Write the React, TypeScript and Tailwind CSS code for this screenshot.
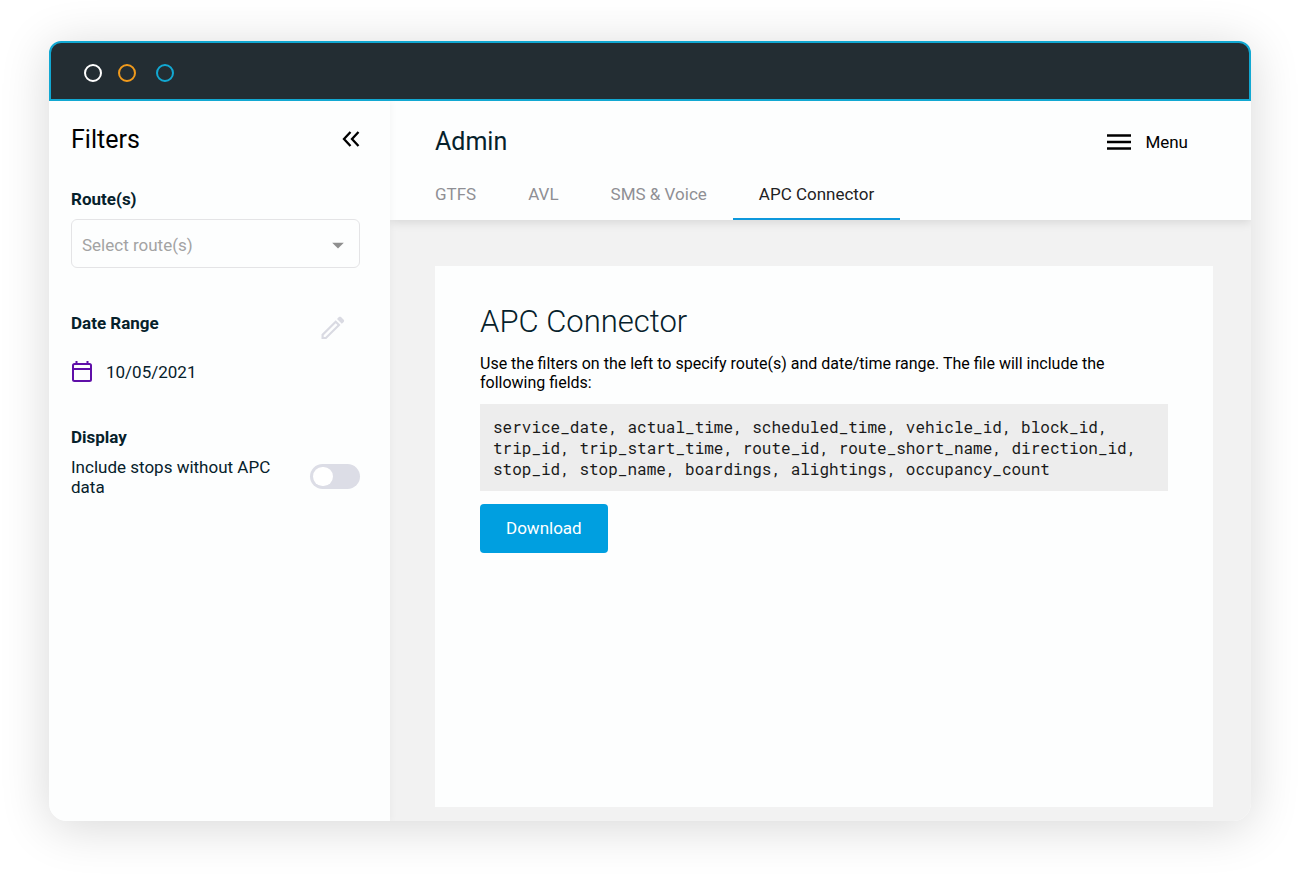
import React, { useState } from "react";
import { MdArrowDropDown } from "react-icons/md";

const TABS = ["GTFS", "AVL", "SMS & Voice", "APC Connector"];

const FIELDS = [
  "service_date",
  "actual_time",
  "scheduled_time",
  "vehicle_id",
  "block_id",
  "trip_id",
  "trip_start_time",
  "route_id",
  "route_short_name",
  "direction_id",
  "stop_id",
  "stop_name",
  "boardings",
  "alightings",
  "occupancy_count",
];

const headingClassName = "text-[17px] leading-5 font-bold text-[#06212b]";

const TitleBar: React.FC = () => (
  <div className="flex h-[60px] flex-shrink-0 items-center rounded-t-xl border-2 border-[#12a8d2] bg-[#232d33] px-[33px] pt-1">
    <span className="h-[18px] w-[18px] rounded-full border-2 border-white" />
    <span className="ml-4 h-[18px] w-[18px] rounded-full border-2 border-[#f09a1c]" />
    <span className="ml-5 h-[18px] w-[18px] rounded-full border-2 border-[#12a8d2]" />
  </div>
);

const Sidebar: React.FC = () => {
  const [includeStops, setIncludeStops] = useState(false);

  return (
    <aside className="z-10 w-[341px] flex-shrink-0 bg-[#fdfefe] pl-[22px] pr-[30px] pt-[23px] shadow-[0_0_8px_rgba(0,0,0,0.05)]">
      <div className="flex items-start justify-between">
        <h2 className="text-[25px] leading-8 text-black">Filters</h2>
        <button type="button" aria-label="Collapse filters" className="mt-[7px]">
          <svg width="18" height="16" viewBox="0 0 18 16" fill="none" stroke="#000" strokeWidth="2.3">
            <path d="M8.500 1 2 8l6.500 7M16.500 1 10 8l6.500 7" />
          </svg>
        </button>
      </div>

      <label htmlFor="routes" className={`mt-[33px] block ${headingClassName}`}>
        Route(s)
      </label>
      <div className="relative mt-[10px]">
        <select
          id="routes"
          defaultValue=""
          className="block h-[49px] w-full appearance-none rounded-md border border-[#e4e4e6] bg-transparent px-[10px] pt-1 text-[17px] text-[#a3a3a3]"
        >
          <option value="">Select route(s)</option>
        </select>
        <MdArrowDropDown
          className="pointer-events-none absolute right-2 top-3 h-7 w-7 text-[#8f8f8f]"
          aria-hidden="true"
        />
      </div>

      <div className="mt-[45px] flex justify-between pr-[15px]">
        <h3 className={headingClassName}>Date Range</h3>
        <button type="button" aria-label="Edit date range" className="mt-[3px]">
          <svg width="25" height="24" viewBox="0 0 25 24" fill="#d9dae2">
            <path
              fillRule="evenodd"
              d="M1.500 18.200 15.700 4.200l4.800 4.800-14.200 14H1.500v-4.800Zm2.200 2.700h1.700L17.500 9 15.700 7.200 3.700 19.200v1.700Z"
            />
            <path d="m17 3 1.900-1.900c.6-.6 1.500-.6 2.100 0l2.700 2.700c.6.6.6 1.500 0 2.100l-1.900 1.900L17 3Z" />
          </svg>
        </button>
      </div>

      <div className="mt-5 flex items-center">
        <svg width="22" height="22" viewBox="0 0 22 22" fill="none" stroke="#5f0fa8" strokeWidth="2">
          <rect x="2" y="3" width="18" height="17" rx="1.500" />
          <path d="M2 8h18M5.500 0v4M16.500 0v4" />
        </svg>
        <span className="ml-[13px] text-[17px] leading-6 text-[#06212b]">10/05/2021</span>
      </div>

      <h3 className={`mt-[43px] ${headingClassName}`}>Display</h3>
      <div className="mt-[10px] flex items-start justify-between">
        <label htmlFor="include-stops" className="w-[220px] text-[17px] leading-5 text-[#06212b]">
          Include stops without APC data
        </label>
        <input
          id="include-stops"
          type="checkbox"
          role="switch"
          checked={includeStops}
          onChange={(e) => setIncludeStops(e.target.checked)}
          className="mt-[7px] h-[25px] w-[50px] flex-shrink-0 cursor-pointer appearance-none rounded-full bg-[#dcdde6] p-[3px] before:block before:h-[19px] before:w-5 before:rounded-full before:bg-white checked:bg-[#009fe0] checked:before:ml-6"
        />
      </div>
    </aside>
  );
};

const App: React.FC = () => {
  const [activeTab, setActiveTab] = useState("APC Connector");

  return (
    <div className="flex min-h-screen flex-col bg-white px-[49px] pb-[57px] pt-[41px] font-['Roboto',sans-serif]">
      <div className="flex flex-1 flex-col rounded-t-xl rounded-b-[18px] shadow-[0_6px_50px_rgba(0,0,0,0.16)]">
        <TitleBar />
        <div className="flex flex-1 overflow-hidden rounded-b-[18px]">
          <Sidebar />

          <div className="flex min-w-0 flex-1 flex-col bg-[#f2f2f2]">
            <header className="bg-[#fdfefe] shadow-[0_2px_10px_rgba(0,0,0,0.12)]">
              <div className="flex items-center justify-between pl-[45px] pr-[63px] pt-[25px]">
                <h1 className="text-[25px] leading-8 text-[#06212b]">Admin</h1>
                <button type="button" className="flex items-center gap-[14px] text-[17px] leading-6 text-black">
                  <svg width="24" height="16" viewBox="0 0 24 16" fill="#000" aria-hidden="true">
                    <path d="M0 .3h24v2.500H0zM0 6.800h24v2.500H0zM0 13.200h24v2.500H0z" />
                  </svg>
                  Menu
                </button>
              </div>
              <nav className="mt-[11px] flex pl-[19px]">
                {TABS.map((tab) => (
                  <button
                    key={tab}
                    type="button"
                    onClick={() => setActiveTab(tab)}
                    aria-current={tab === activeTab ? "page" : undefined}
                    className={`h-[51px] border-b-2 px-[26px] pt-[3px] text-[17px] ${
                      tab === activeTab
                        ? "border-[#0d98dc] text-[#1f2224]"
                        : "border-transparent text-[#8f8f94]"
                    }`}
                  >
                    {tab}
                  </button>
                ))}
              </nav>
            </header>

            <main className="flex flex-1 flex-col pb-[14px] pl-[45px] pr-[38px] pt-[46px]">
              <section className="flex-1 bg-[#fdfefe] px-[45px] pt-9">
                <h2 className="text-[31px] leading-10 font-light text-[#06212b]">APC Connector</h2>
                <p className="mt-3 text-base leading-[19px] text-black">
                  Use the filters on the left to specify route(s) and date/time range. The file will
                  include the following fields:
                </p>
                <code className="mt-3 block bg-[#ededed] px-[13px] py-3 font-['Roboto_Mono','DejaVu_Sans_Mono',monospace] text-base leading-[21px] text-[#1a1a1a]">
                  {FIELDS.join(", ")}
                </code>
                <button
                  type="button"
                  className="mt-[13px] h-[49px] rounded bg-[#009fe0] px-[26px] text-[17px] text-white"
                >
                  Download
                </button>
              </section>
            </main>
          </div>
        </div>
      </div>
    </div>
  );
};

export default App;
